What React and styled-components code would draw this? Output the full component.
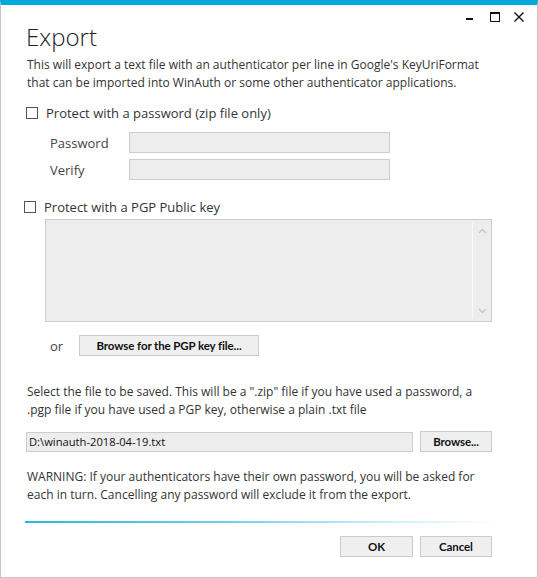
import React from 'react'
import styled, { createGlobalStyle } from 'styled-components'

const Global = createGlobalStyle`
  html, body {
    margin: 0;
    padding: 0;
    background: #ffffff;
  }
  * {
    box-sizing: border-box;
  }
`

const Window = styled.div`
  width: 538px;
  height: 578px;
  border: 1px solid #c6c6c6;
  border-top: 5px solid #00a9d9;
  background: #fff;
  font-family: "Open Sans", "Noto Sans", sans-serif;
  color: #333;
  display: flex;
  flex-direction: column;
  padding: 0 45px 0 24px;
  overflow: hidden;

  & > * {
    flex-shrink: 0;
  }
`

const TitleBar = styled.div`
  height: 17px;
  display: flex;
  justify-content: flex-end;
  align-items: flex-end;
  gap: 14px;
  margin-right: -32px;
`

const Control = styled.button`
  width: 10px;
  height: 10px;
  padding: 0;
  border: 0;
  background: none;
  display: flex;
  align-items: center;
  justify-content: center;
`

const Title = styled.h1`
  margin: 0;
  padding-left: 1px;
  font-weight: 300;
  font-size: 24px;
  line-height: 30px;
  color: #222;
`

const Text = styled.p`
  margin: ${p => p.$top || 0}px 0 0;
  padding-left: 2px;
  font-size: 12px;
  line-height: 18px;
  color: #333;
  white-space: nowrap;
`

const CheckRow = styled.label`
  margin-top: ${p => p.$top}px;
  margin-left: ${p => p.$left}px;
  height: 20px;
  display: flex;
  align-items: center;
  gap: 8px;
  font-size: 13px;
  color: #333;
`

const Box = styled.span`
  width: 12px;
  height: 12px;
  border: 1px solid #555;
  background: #fff;
`

const Fields = styled.div`
  margin-top: 9px;
  margin-left: 25px;
  display: grid;
  grid-template-columns: 79px 261px;
  row-gap: 6px;
  align-items: center;
`

const FieldLabel = styled.span`
  font-size: 13px;
  color: #444;
`

const Input = styled.div`
  height: ${p => p.$h || 21}px;
  background: #ededed;
  border: 1px solid #cdcdcd;
  font-size: 11.2px;
  line-height: 18px;
  padding-left: 2px;
  color: #111;
  flex: ${p => (p.$grow ? 1 : 'none')};
`

const KeyArea = styled.div`
  margin: 2px 0 0 20px;
  height: 103px;
  background: #ededed;
  border: 1px solid #cdcdcd;
  display: flex;
  justify-content: flex-end;
`

const ScrollBar = styled.div`
  width: 19px;
  margin: 2px 0;
  border-left: 1px solid #fafafa;
  display: flex;
  flex-direction: column;
  justify-content: space-between;
  align-items: center;
  padding: 6px 0 5px;
`

const Row = styled.div`
  margin-top: ${p => p.$top}px;
  margin-left: ${p => p.$left || 0}px;
  display: flex;
  align-items: center;
  gap: ${p => p.$gap || 7}px;
  justify-content: ${p => (p.$end ? 'flex-end' : 'flex-start')};
`

const Or = styled.span`
  width: 22px;
  font-size: 13px;
  color: #444;
`

const Button = styled.button`
  width: ${p => p.$w}px;
  height: 21px;
  padding: 0;
  background: #efefef;
  border: 1px solid #cbcbcb;
  font-family: Lato, "Open Sans", sans-serif;
  font-weight: 700;
  font-size: 11.5px;
  letter-spacing: -0.1px;
  color: #111;
`

const Divider = styled.hr`
  margin: 17px -8px 0 0;
  height: 2px;
  border: 0;
  background: linear-gradient(to right, #2bb6df 0%, #6ccdea 40%, #c6edf8 75%, #ffffff 100%);
`

const Chevron = ({ up }) => (
  <svg width="9" height="6" viewBox="0 0 9 6">
    <path d={up ? 'M1 5 L4.5 1.5 L8 5' : 'M1 1 L4.5 4.5 L8 1'} fill="none" stroke="#c4c4c4" strokeWidth="1.3" />
  </svg>
)

export default function App() {
  return (
    <>
      <Global />
      <Window>
        <TitleBar>
          <Control aria-label="minimize">
            <svg width="10" height="10" viewBox="0 0 10 10">
              <rect x="0" y="6" width="7" height="2" fill="#111" />
            </svg>
          </Control>
          <Control aria-label="maximize">
            <svg width="10" height="10" viewBox="0 0 10 10">
              <rect x="0.5" y="0.5" width="9" height="9" fill="none" stroke="#111" />
              <rect x="0" y="0" width="10" height="2" fill="#111" />
            </svg>
          </Control>
          <Control aria-label="close">
            <svg width="10" height="10" viewBox="0 0 10 10">
              <path d="M0.5 0.5 L9.5 9.5 M9.5 0.5 L0.5 9.5" stroke="#111" strokeWidth="1.4" />
            </svg>
          </Control>
        </TitleBar>

        <Title>Export</Title>
        <Text $top={4}>
          This will export a text file with an authenticator per line in Google's KeyUriFormat
          <br />
          that can be imported into WinAuth or some other authenticator applications.
        </Text>

        <CheckRow $top={11} $left={1}>
          <Box />
          Protect with a password (zip file only)
        </CheckRow>

        <Fields>
          <FieldLabel>Password</FieldLabel>
          <Input />
          <FieldLabel>Verify</FieldLabel>
          <Input />
        </Fields>

        <CheckRow $top={17} $left={-1}>
          <Box />
          Protect with a PGP Public key
        </CheckRow>

        <KeyArea>
          <ScrollBar>
            <Chevron up />
            <Chevron />
          </ScrollBar>
        </KeyArea>

        <Row $top={13} $left={25} $gap={0}>
          <Or>or</Or>
          <Button $w={180}>Browse for the PGP key file...</Button>
        </Row>

        <Text $top={27}>
          Select the file to be saved. This will be a ".zip" file if you have used a password, a
          <br />
          .pgp file if you have used a PGP key, otherwise a plain .txt file
        </Text>

        <Row $top={12} $left={1}>
          <Input $grow $h={20}>D:\winauth-2018-04-19.txt</Input>
          <Button $w={72}>Browse...</Button>
        </Row>

        <Text $top={16}>
          WARNING: If your authenticators have their own password, you will be asked for
          <br />
          each in turn. Cancelling any password will exclude it from the export.
        </Text>

        <Divider />

        <Row $top={13} $end>
          <Button $w={73}>OK</Button>
          <Button $w={72}>Cancel</Button>
        </Row>
      </Window>
    </>
  )
}
